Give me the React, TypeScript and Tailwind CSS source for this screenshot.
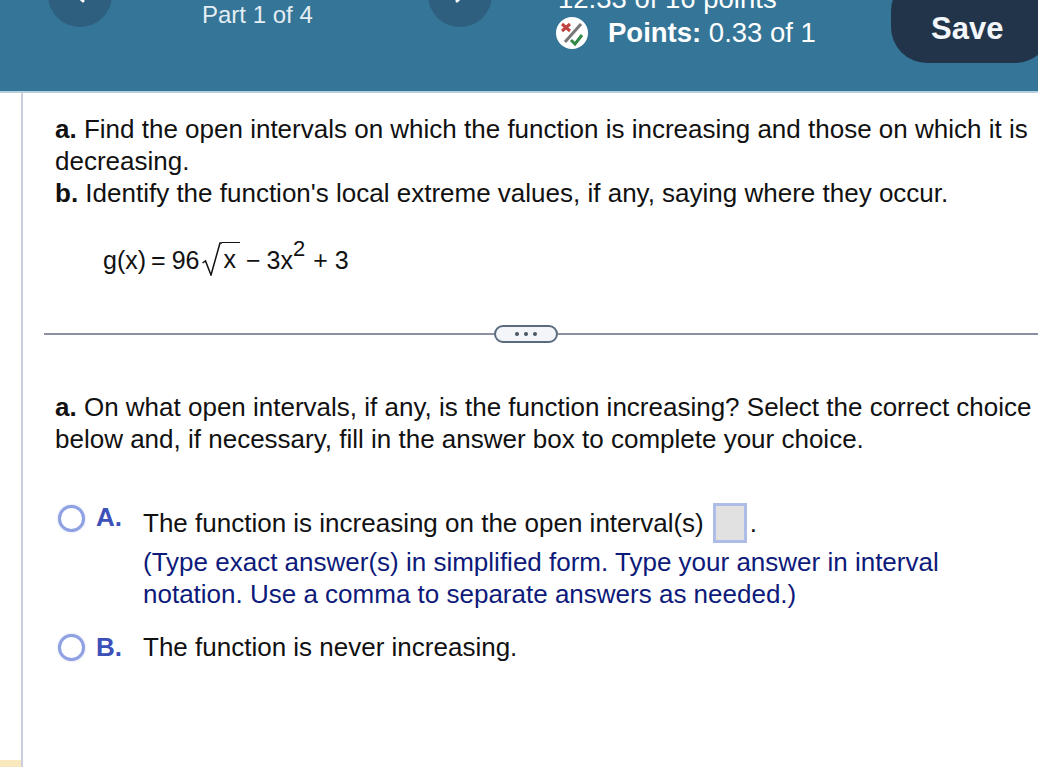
import { ChevronLeft, ChevronRight } from "lucide-react"

function PointsIcon() {
    return (
        <svg width="32" height="32" viewBox="0 0 32 32" className="shrink-0">
            <circle cx="16" cy="16" r="16" fill="#fff" />
            <line x1="9" y1="25" x2="25" y2="7" stroke="#777" strokeWidth="3" />
            <path d="M6 7l8 7M14 7l-8 7" stroke="#c0443f" strokeWidth="3" fill="none" />
            <path d="M15 23l4 4 7-9" stroke="#2f8a45" strokeWidth="3" fill="none" />
        </svg>
    )
}

function Choice({ letter, mt, radioClass, letterClass, children }: { letter: string; mt: string; radioClass: string; letterClass: string; children: React.ReactNode }) {
    return (
        <div className={`flex ${mt}`}>
            <div className={`w-[27px] h-[27px] ml-[1px] rounded-full border-[3px] border-[#8fa1e2] bg-white shadow-[0_0_2px_#b4bfea] shrink-0 ${radioClass}`}></div>
            <div className={`w-[47px] ml-[11px] font-bold text-[#3b50b8] shrink-0 ${letterClass}`}>{letter}</div>
            <div className="flex-1">{children}</div>
        </div>
    )
}

export default function App() {
    return (
        <div className="w-[1038px] h-[767px] overflow-hidden bg-white text-[26px] leading-[32px] text-[#111] font-['Liberation_Sans',Arial,sans-serif]">
            <div className="flex items-start h-[93px] overflow-hidden bg-[#357597] border-b-2 border-[#b5cfdd]">
                <button className="w-[64px] h-[64px] -mt-[37px] ml-[48px] rounded-full bg-[#2e5f7f] flex items-center justify-center text-white shrink-0">
                    <ChevronLeft size={24} strokeWidth={3} />
                </button>
                <div className="w-[316px] ml-[90px] text-[24px] leading-[30px] text-[#e4edf3] shrink-0">Part 1 of 4</div>
                <button className="w-[64px] h-[64px] -mt-[37px] -ml-[90px] rounded-full bg-[#2e5f7f] flex items-center justify-center text-white shrink-0">
                    <ChevronRight size={24} strokeWidth={3} />
                </button>
                <div className="w-[335px] ml-[64px] -mt-[17px] text-white text-[27.5px] shrink-0">
                    <div className="ml-[2px] h-[33px]">12.33 of 16 points</div>
                    <div className="flex items-center gap-[20px]">
                        <PointsIcon />
                        <span className="mt-[1px]"><b>Points:</b> 0.33 of 1</span>
                    </div>
                </div>
                <button className="w-[160px] h-[88px] -mt-[25px] rounded-[36px] bg-[#21344a] text-[#f3f6fa] font-bold text-[31px] text-left pl-[40px] pt-[19px] shrink-0">Save</button>
            </div>
            <div className="flex h-[674px]">
                <div className="w-[23px] flex flex-col justify-end border-r-2 border-[#c9cfdc] shrink-0">
                    <div className="h-[7px] bg-[#f8e8bd]"></div>
                </div>
                <div className="flex-1 pl-[32px] pt-[20px]">
                    <p className="w-[983px]"><b>a.</b> Find the open intervals on which the function is increasing and those on which it is decreasing.</p>
                    <p><b>b.</b> Identify the function's local extreme values, if any, saying where they occur.</p>
                    <div className="flex items-end mt-[35px] ml-[48px] h-[32px] text-[25px] leading-[32px]">
                        <span>g(x)</span>
                        <span className="ml-[5px]">=</span>
                        <span className="ml-[6px]">96</span>
                        <svg width="21" height="34" viewBox="0 0 21 34" className="ml-[2px] self-start -mt-[2px] shrink-0">
                            <path d="M1.5 21l3-2 5.500 14 9-32h2" stroke="#111" strokeWidth="1.5" fill="none" />
                        </svg>
                        <span className="self-start -mt-[2px] border-t-[1.5px] border-[#111] leading-[33px] pl-[1px] pr-[4px]">x</span>
                        <span className="ml-[6px]">−</span>
                        <span className="ml-[6px]">3x</span>
                        <span className="text-[22px] leading-[22px] self-start -mt-[6px]">2</span>
                        <span className="ml-[8px]">+ 3</span>
                    </div>
                    <div className="flex items-center mt-[49px] -ml-[11px]">
                        <div className="w-[450px] h-[2px] bg-[#8a90a2]"></div>
                        <div className="flex items-center justify-center gap-[5px] w-[64px] h-[18px] rounded-[9px] border-2 border-[#5a6b80] bg-[#f3f5f8] shrink-0">
                            <span className="w-[4px] h-[4px] rounded-full bg-[#4b5563]"></span>
                            <span className="w-[4px] h-[4px] rounded-full bg-[#4b5563]"></span>
                            <span className="w-[4px] h-[4px] rounded-full bg-[#4b5563]"></span>
                        </div>
                        <div className="flex-1 h-[2px] bg-[#8a90a2]"></div>
                    </div>
                    <p className="mt-[48px] w-[983px]"><b>a.</b> On what open intervals, if any, is the function increasing? Select the correct choice below and, if necessary, fill in the answer box to complete your choice.</p>
                    <div className="mt-[51px] pl-[2px]">
                        <Choice letter="A." mt="mt-0" radioClass="-mt-[1px]" letterClass="-mt-[5px]">
                            <div className="flex items-center h-[40px] -mt-[3px]">
                                <span>The function is increasing on the open interval(s)</span>
                                <span className="w-[34px] h-[40px] ml-[9px] border-[3px] border-[#aebce8] bg-[#e1e1e1] inline-block"></span>
                                <span className="ml-[3px]">.</span>
                            </div>
                            <div className="text-[#0d1a7a] mt-[3px] w-[880px]">(Type exact answer(s) in simplified form. Type your answer in interval notation. Use a comma to separate answers as needed.)</div>
                        </Choice>
                        <Choice letter="B." mt="mt-[21px]" radioClass="mt-[3px]" letterClass="">
                            The function is never increasing.
                        </Choice>
                    </div>
                </div>
            </div>
        </div>
    )
}
